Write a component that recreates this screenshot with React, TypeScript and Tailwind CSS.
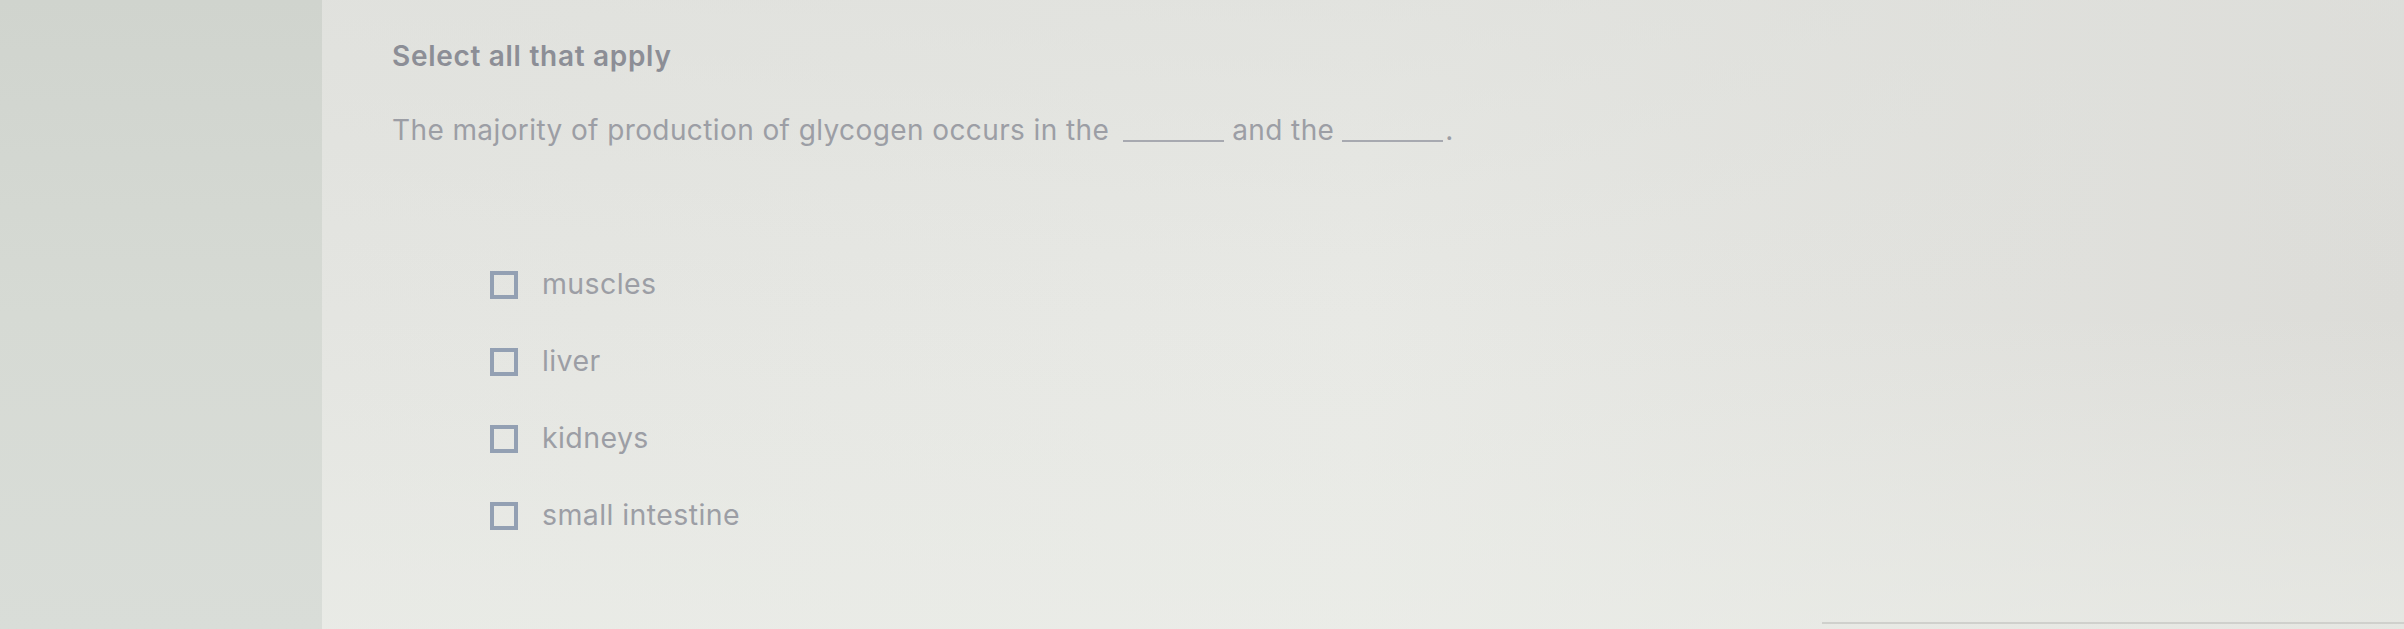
import React from "react";

const options = ["muscles", "liver", "kidneys", "small intestine"];

function Blank({ className }: { className: string }) {
  return <span className={`inline-block w-[101px] border-b-2 border-[#a7a9b0] translate-y-[2px] ${className}`} />;
}

export default function App() {
  return (
    <main className="flex h-[629px] w-full overflow-hidden font-['Inter',sans-serif]">
      {/* side panel */}
      <div className="w-[322px] shrink-0 bg-gradient-to-b from-[#d0d4ce] via-[#d6dad4] to-[#d9ddd8]" />

      {/* question panel */}
      <section className="relative flex-1 bg-gradient-to-r from-[#e4e5e1] via-[#e8e9e5] to-[#dcdcd8] pl-[70px] pt-[38px]">
        <div className="absolute inset-0 bg-gradient-to-b from-[#dedfdb]/60 via-transparent to-[#eceee9]/60" />
        <div className="relative">
          <h2 className="text-[28px] leading-[36px] font-semibold tracking-[0.7px] text-[#8c8e96]">
            Select all that apply
          </h2>

          <p className="mt-[38px] text-[28px] leading-[36px] tracking-[0.4px] text-[#9c9ea5]">
            The majority of production of glycogen occurs in the
            <Blank className="ml-[14px] mr-[8px]" />
            and the
            <Blank className="ml-[8px] mr-[2px]" />
            .
          </p>

          <ul className="mt-[118px] ml-[98px] flex flex-col gap-[41px]">
            {options.map((o) => (
              <li key={o} className="flex items-end gap-[24px] h-[36px]">
                <span className="w-[28px] h-[28px] border-[4px] border-[#93a0b3] mb-[3px] shrink-0" />
                <span className="text-[28.5px] leading-[36px] tracking-[0.4px] text-[#9c9ea5]">{o}</span>
              </li>
            ))}
          </ul>
        </div>
        <div className="absolute bottom-[5px] left-[1500px] right-0 border-b-2 border-[#cfd0cc]" />
      </section>
    </main>
  );
}
